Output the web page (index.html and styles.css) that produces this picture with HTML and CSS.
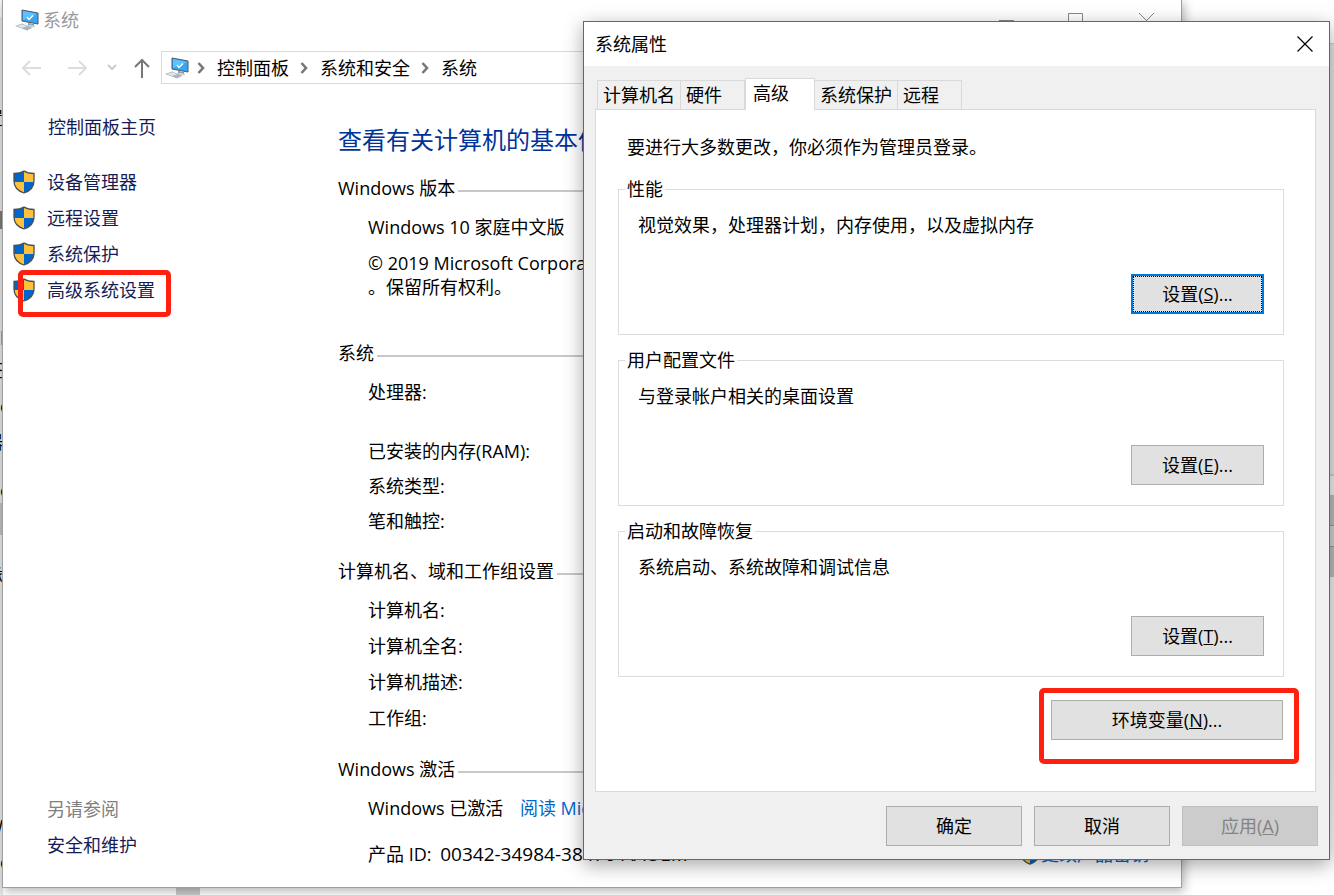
FILE: index.html
```html
<!DOCTYPE html>
<html lang="zh-CN">
<head>
    <meta charset="UTF-8">
    <title>系统属性</title>
    <link rel="stylesheet" href="styles.css">
</head>
<body>

    <!-- shared icons -->
    <svg class="sprite" aria-hidden="true">
        <symbol id="shield" viewBox="0 0 22 24">
            <path d="M11 1C8 3 4 3.500 1 3.500V11C1 17 5 21 11 23C17 21 21 17 21 11V3.500C18 3.500 14 3 11 1Z" fill="#0066cc"/>
            <path d="M11 1V12H21V3.500C18 3.500 14 3 11 1Z" fill="#ffc13b"/>
            <path d="M1 12H11V23C5 21 1 17 1 12Z" fill="#ffc13b"/>
            <path d="M11 1C8 3 4 3.500 1 3.500V11C1 17 5 21 11 23C17 21 21 17 21 11V3.500C18 3.500 14 3 11 1Z" fill="none" stroke="#4a4f55" stroke-width="1.300"/>
        </symbol>
        <symbol id="computer" viewBox="0 0 24 22">
            <path d="M7 1L23 4V15L7 12Z" fill="#35a7f5" stroke="#4f5962" stroke-width="1"/>
            <path d="M8 2L22 5L8 11Z" fill="#5fc0ff"/>
            <path d="M12 8L14 10.500L18 6.500" fill="none" stroke="#fff" stroke-width="1.500"/>
            <path d="M13 14L19 15V17L13 16Z" fill="#8a949d"/>
            <path d="M9 17L16 15.500L21 17.500L14 19.500Z" fill="#c8d0d8"/>
            <path d="M0 17L7 14.500L14 17.500L17 19L12 21.500L8 20Z" fill="#a9b4be"/>
            <path d="M2 17L7 15.200L12 17.300L7 19Z" fill="#dfe5ea"/>
        </symbol>
        <symbol id="chevron" viewBox="0 0 8 12">
            <path d="M1.500 1L6 6L1.500 11" fill="none" stroke="#777" stroke-width="2.600"/>
        </symbol>
    </svg>

    <div class="desktop">
        <!-- slivers of the windows behind -->
        <ul class="edge edge-left" aria-hidden="true">
            <li class="end">置</li>
            <li class="blue">p</li>
            <li class="end">签</li>
            <li>o</li>
            <li class="end">器</li>
            <li>e</li>
            <li class="end">缘</li>
            <li class="end">W</li>
            <li>o</li>
        </ul>
        <div class="edge edge-right"></div>
        <div class="scroll-bottom"></div>

        <!-- control panel window -->
        <main class="window">
            <header class="titlebar">
                <svg class="pc"><use href="#computer"/></svg>
                <span>系统</span>
                <svg class="controls" viewBox="0 0 156 22">
                    <path d="M0 11.500H15M69.500 4.500H83.500V18.500H69.500ZM140 4L155 19M155 4L140 19" fill="none" stroke="#888"/>
                </svg>
            </header>

            <nav class="navbar">
                <svg class="arrows" viewBox="0 0 132 24">
                    <path d="M21 12H3M10 5L3 12L10 19M48 12H66M59 5L66 12L59 19" fill="none" stroke="#ddd" stroke-width="2"/>
                    <path d="M88 9L92 13L96 9" fill="none" stroke="#ccc" stroke-width="2"/>
                    <path d="M122 22V4M115 11L122 4L129 11" fill="none" stroke="#777" stroke-width="2"/>
                </svg>
                <div class="address">
                    <svg class="pc"><use href="#computer"/></svg>
                    <svg class="chev"><use href="#chevron"/></svg>
                    <a href="#">控制面板</a>
                    <svg class="chev"><use href="#chevron"/></svg>
                    <a href="#">系统和安全</a>
                    <svg class="chev"><use href="#chevron"/></svg>
                    <a href="#">系统</a>
                </div>
            </nav>

            <div class="columns">
                <aside class="sidebar">
                    <a class="home" href="#">控制面板主页</a>
                    <ul class="tasks">
                        <li><svg><use href="#shield"/></svg><a href="#">设备管理器</a></li>
                        <li><svg><use href="#shield"/></svg><a href="#">远程设置</a></li>
                        <li><svg><use href="#shield"/></svg><a href="#">系统保护</a></li>
                        <li class="marked"><svg><use href="#shield"/></svg><a href="#">高级系统设置</a></li>
                    </ul>
                    <div class="see-also">
                        <p>另请参阅</p>
                        <a href="#">安全和维护</a>
                    </div>
                </aside>

                <section class="info">
                    <h1>查看有关计算机的基本信息</h1>

                    <h2>Windows 版本</h2>
                    <div class="edition">
                        <p>Windows 10 家庭中文版</p>
                        <p>© 2019 Microsoft Corporation<br>。保留所有权利。</p>
                    </div>

                    <h2>系统</h2>
                    <ul class="specs">
                        <li class="cpu">处理器:</li>
                        <li>已安装的内存(RAM):</li>
                        <li>系统类型:</li>
                        <li>笔和触控:</li>
                    </ul>

                    <h2>计算机名、域和工作组设置</h2>
                    <ul class="names">
                        <li>计算机名:</li>
                        <li>计算机全名:</li>
                        <li>计算机描述:</li>
                        <li>工作组:</li>
                    </ul>

                    <h2>Windows 激活</h2>
                    <div class="activation">
                        <p>Windows 已激活 <a href="#">阅读 Microsoft 软件许可条款</a></p>
                        <div class="product">
                            <p>产品 ID: <span>00342-34984-38476-AAOEM</span></p>
                            <a href="#"><svg><use href="#shield"/></svg>更改产品密钥</a>
                        </div>
                    </div>
                </section>
            </div>
        </main>

        <!-- system properties dialog -->
        <div class="dialog" role="dialog" aria-labelledby="dialogTitle">
            <header class="dialog-title">
                <span id="dialogTitle">系统属性</span>
                <button type="button" class="close" aria-label="关闭">
                    <svg viewBox="0 0 16 16"><path d="M0.500 0.500L15.500 15.500M15.500 0.500L0.500 15.500" stroke="#000" stroke-width="1.200"/></svg>
                </button>
            </header>

            <div class="dialog-body">
                <div class="tabs" role="tablist">
                    <button type="button" role="tab">计算机名</button>
                    <button type="button" role="tab" class="short">硬件</button>
                    <button type="button" role="tab" class="short active" aria-selected="true">高级</button>
                    <button type="button" role="tab">系统保护</button>
                    <button type="button" role="tab" class="short">远程</button>
                </div>

                <form class="panel">
                    <p class="note">要进行大多数更改，你必须作为管理员登录。</p>

                    <fieldset>
                        <legend>性能</legend>
                        <p>视觉效果，处理器计划，内存使用，以及虚拟内存</p>
                        <button type="button" class="btn focused">设置(<u>S</u>)...</button>
                    </fieldset>
                    <fieldset>
                        <legend>用户配置文件</legend>
                        <p>与登录帐户相关的桌面设置</p>
                        <button type="button" class="btn">设置(<u>E</u>)...</button>
                    </fieldset>
                    <fieldset>
                        <legend>启动和故障恢复</legend>
                        <p>系统启动、系统故障和调试信息</p>
                        <button type="button" class="btn">设置(<u>T</u>)...</button>
                    </fieldset>

                    <div class="env">
                        <button type="button" class="btn">环境变量(<u>N</u>)...</button>
                    </div>
                </form>

                <footer class="actions">
                    <button type="button" class="btn">确定</button>
                    <button type="button" class="btn">取消</button>
                    <button type="button" class="btn" disabled>应用(<u>A</u>)</button>
                </footer>
            </div>
        </div>
    </div>

</body>
</html>
```
FILE: styles.css
```css
*, *::before, *::after {
    box-sizing: border-box;
}

body {
    margin: 0;
    font-family: "Open Sans", "Noto Sans CJK SC", sans-serif;
    font-size: 18px;
    line-height: 24px;
    color: #000;
}

h1, h2, p, ul {
    margin: 0;
    padding: 0;
    font-weight: normal;
}

ul {
    list-style: none;
}

a {
    color: inherit;
    text-decoration: none;
}

button {
    font: inherit;
    color: inherit;
}

.sprite {
    position: absolute;
    width: 0;
    height: 0;
}

.desktop {
    position: relative;
    height: 100vh;
    overflow: hidden;
    background: #fff;
}

.edge {
    position: absolute;
    overflow: hidden;
}

.edge-left {
    left: 0;
    top: 0;
    bottom: 0;
    width: 3px;
    display: grid;
    grid-template-columns: 3px;
    grid-template-rows: 216px 36px 36px 36px 48px 84px 252px 36px 24px;
    padding-top: 106px;
    background: linear-gradient(#f4f4f4 17px, #e0e0e0 17px 211px, #777 211px 229px, #e0e0e0 229px 503px, #bbb 503px 535px, #e4e4e4 535px);
}

.edge-left li {
    display: flex;
}

.edge-left .end {
    justify-content: flex-end;
}

.edge-left .blue {
    color: #0050b0;
}

.edge-right {
    top: 43px;
    right: 0;
    bottom: 0;
    width: 5px;
    background: linear-gradient(#ccc 1px, #e4e4e4 1px 431px, #ccc 431px 433px, #eee 433px 452px, #bbb 452px 482px, #999 482px 483px, #d0d0d0 483px 503px, #999 503px 504px, #bbb 504px 534px, #eee 534px 700px, #fff 820px);
}

.scroll-bottom {
    position: absolute;
    left: 176px;
    bottom: 0;
    width: 24px;
    height: 10px;
    background: #ccc;
}

/* control panel window */
.window {
    position: absolute;
    left: 2px;
    right: 152px;
    top: 0;
    background: #fff;
    border: 1px solid #a0a0a0;
    border-top: none;
    box-shadow: 2px 3px 10px rgba(0, 0, 0, 0.3);
}

.titlebar {
    display: flex;
    align-items: center;
    height: 39px;
    padding: 0 26px 0 12px;
    gap: 4px;
    color: #999;
}

.pc {
    width: 24px;
    height: 22px;
    flex: none;
}

.controls {
    width: 156px;
    height: 22px;
    margin-left: auto;
}

.navbar {
    display: flex;
    align-items: center;
    height: 57px;
    padding-left: 17px;
}

.arrows {
    width: 132px;
    height: 24px;
    margin-right: 9px;
}

.address {
    flex: 1;
    display: flex;
    align-items: center;
    height: 33px;
    padding-left: 3px;
    border: 1px solid #d9d9d9;
}

.chev {
    width: 8px;
    height: 12px;
    margin: 0 12px 0 11px;
}

.address .pc + .chev {
    margin-left: 8px;
}

.columns {
    display: flex;
}

.sidebar {
    display: flex;
    flex-direction: column;
    width: 335px;
    padding: 19px 0 30px 9px;
    color: #151c55;
}

.home {
    margin-left: 36px;
}

.tasks {
    margin-top: 25px;
}

.tasks li {
    position: relative;
    display: flex;
    align-items: center;
    gap: 11px;
    height: 36px;
}

.tasks svg {
    width: 24px;
    height: 24px;
}

.marked::after {
    content: "";
    position: absolute;
    left: 6px;
    top: -2px;
    width: 153px;
    height: 47px;
    border: 5px solid #ff2010;
    border-radius: 5px;
}

.see-also {
    margin: auto 0 0 35px;
}

.see-also p {
    margin-bottom: 12px;
    color: #808080;
}

.info {
    flex: 1;
    padding-bottom: 21px;
    white-space: nowrap;
}

.info h1 {
    margin: 28px 0 20px;
    font-size: 24px;
    line-height: 32px;
    color: #003399;
}

.info h2 {
    display: flex;
    align-items: center;
    gap: 3px;
    font-size: 18px;
}

.info h2::after {
    content: "";
    flex: 1;
    height: 2px;
    margin-top: 5px;
    background: #c8c8c8;
}

.edition, .specs, .names, .activation {
    padding-left: 30px;
}

.edition {
    padding-top: 15px;
    padding-bottom: 42px;
}

.edition p + p {
    margin-top: 12px;
}

.specs {
    padding-top: 15px;
    padding-bottom: 15px;
}

.specs li {
    height: 35px;
}

.specs .cpu {
    height: 59px;
}

.names {
    padding-top: 15px;
    padding-bottom: 15px;
}

.names li {
    height: 36px;
}

.activation {
    padding-top: 15px;
}

.activation a {
    color: #0066cc;
}

.activation p a {
    margin-left: 12px;
}

.product {
    display: flex;
    justify-content: space-between;
    margin-top: 22px;
    padding-right: 32px;
}

.product span {
    margin-left: 4px;
    font-size: 19px;
}

.product a {
    display: flex;
    align-items: center;
}

.product svg {
    width: 22px;
    height: 22px;
}

/* system properties dialog */
.dialog {
    position: absolute;
    left: 583px;
    right: 4px;
    top: 21px;
    background: #f0f0f0;
    border: 1px solid #666;
    box-shadow: 0 5px 18px rgba(0, 0, 0, 0.35);
}

.dialog-title {
    display: flex;
    justify-content: space-between;
    align-items: center;
    height: 44px;
    padding: 0 16px 0 11px;
    background: #fff;
}

.close {
    display: flex;
    padding: 0;
    border: none;
    background: none;
}

.close svg {
    width: 16px;
    height: 16px;
}

.dialog-body {
    padding: 12px 11px 13px;
}

.tabs {
    display: flex;
    align-items: flex-end;
    padding-left: 2px;
}

.tabs button {
    height: 29px;
    padding: 0 5px;
    border: 1px solid #d9d9d9;
    border-width: 1px 1px 0 0;
    background: #f0f0f0;
    text-align: left;
}

.tabs button:first-child {
    border-left-width: 1px;
}

.tabs .short {
    width: 64px;
}

.tabs .active {
    position: relative;
    width: 70px;
    height: 32px;
    margin-bottom: -1px;
    padding: 0 7px 3px;
    border-left-width: 1px;
    background: #fff;
}

.panel {
    margin-right: 2px;
    padding: 25px 31px 51px 22px;
    background: #fff;
    border: 1px solid #d9d9d9;
}

.note {
    margin: 0 0 18px 9px;
}

fieldset {
    display: flex;
    flex-direction: column;
    height: 158px;
    margin: 0 0 13px;
    padding: 12px 19px 20px;
    border: 1px solid #dcdcdc;
}

legend {
    margin-left: -13px;
    padding: 0 2px;
}

.btn {
    min-width: 133px;
    height: 40px;
    padding: 0;
    border: 1px solid #adadad;
    background: #e1e1e1;
}

fieldset .btn {
    align-self: flex-end;
    margin-top: auto;
}

.btn.focused {
    border: 2px solid #0078d7;
    outline: 1px dotted #000;
    outline-offset: -3px;
}

.env {
    position: relative;
    display: flex;
    justify-content: flex-end;
    margin-top: 23px;
    margin-right: 1px;
}

.env .btn {
    width: 232px;
}

.env::after {
    content: "";
    position: absolute;
    right: -16px;
    top: -12px;
    width: 260px;
    height: 76px;
    border: 5px solid #ff2010;
    border-radius: 5px;
    pointer-events: none;
}

.actions {
    display: flex;
    justify-content: flex-end;
    gap: 12px;
    margin-top: 14px;
}

.actions .btn {
    width: 136px;
}

.btn:disabled {
    border-color: #bfbfbf;
    background: #ccc;
    color: #838383;
}
```
